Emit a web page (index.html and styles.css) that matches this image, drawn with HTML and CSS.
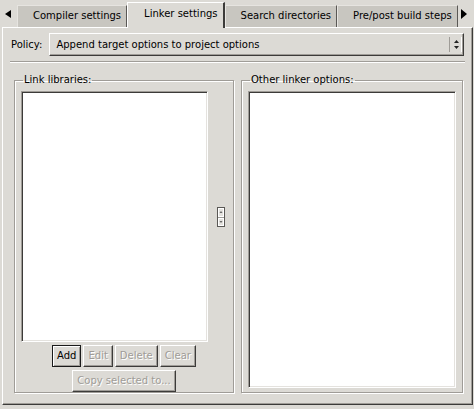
FILE: index.html
```html
<!DOCTYPE html>
<html>
<head>
<meta charset="utf-8">
<link rel="stylesheet" href="styles.css">
</head>
<body>
<div class="tabbar">
  <div class="scroll scroll-left"><span class="tri-left"></span></div>
  <div class="tab">Compiler settings</div>
  <div class="tab active">Linker settings</div>
  <div class="tab">Search directories</div>
  <div class="tab">Pre/post build steps</div>
  <div class="scroll scroll-right"><span class="tri-right"></span></div>
</div>
<div class="panel">
  <div class="policy-row">
    <span class="policy-label">Policy:</span>
    <div class="combo">
      <span class="combo-text">Append target options to project options</span>
      <span class="combo-spin">
        <svg width="5" height="9" viewBox="0 0 5 9"><polygon points="2.5,0 5,3 0,3" fill="#222"/><polygon points="0,6 5,6 2.5,9" fill="#222"/></svg>
      </span>
    </div>
  </div>
  <div class="separator"></div>
  <div class="groups">
    <fieldset class="group group-left">
      <legend>Link libraries:</legend>
      <div class="list-row">
        <div class="listbox list-libs"></div>
        <div class="handle">
          <svg width="8" height="20" viewBox="0 0 8 20">
            <rect x="0.5" y="0.5" width="7" height="19" fill="#e4e2de" stroke="#5a5855"/>
            <line x1="0" y1="10" x2="8" y2="10" stroke="#5a5855"/>
            <rect x="1.5" y="1.5" width="5" height="8" fill="none" stroke="#fff"/>
            <rect x="1.5" y="11.5" width="5" height="7" fill="none" stroke="#fff"/>
            <polygon points="4,4 5.5,6 2.5,6" fill="#666"/>
            <polygon points="2.5,14 5.5,14 4,16" fill="#666"/>
          </svg>
        </div>
      </div>
      <div class="btn-row">
        <button class="btn default">Add</button>
        <button class="btn" disabled>Edit</button>
        <button class="btn" disabled>Delete</button>
        <button class="btn" disabled>Clear</button>
      </div>
      <div class="btn-row copy-row">
        <button class="btn" disabled>Copy selected to...</button>
      </div>
    </fieldset>
    <fieldset class="group group-right">
      <legend>Other linker options:</legend>
      <div class="listbox text-area"></div>
    </fieldset>
  </div>
</div>
</body>
</html>
```
FILE: styles.css
```css
html, body {
  margin: 0;
  padding: 0;
}
body {
  width: 474px;
  height: 409px;
  overflow: hidden;
  background: #dcdad5;
  font-family: "DejaVu Sans", "Liberation Sans", sans-serif;
  font-size: 10px;
  line-height: 12px;
  color: #000;
}

/* ---------- tab bar ---------- */
.tabbar {
  display: flex;
  height: 28px;
  align-items: flex-start;
}
.scroll {
  height: 27px;
  display: flex;
  box-sizing: border-box;
}
.scroll-left {
  width: 17px;
  padding: 10px 0 0 5px;
}
.tri-left {
  width: 0;
  height: 0;
  border-right: 6px solid #000;
  border-top: 4px solid transparent;
  border-bottom: 4px solid transparent;
}
.scroll-right {
  flex: 1;
  padding: 9px 0 0 3px;
}
.tri-right {
  width: 0;
  height: 0;
  border-left: 6px solid #000;
  border-top: 5px solid transparent;
  border-bottom: 5px solid transparent;
}
.tab {
  box-sizing: border-box;
  margin-top: 5px;
  height: 22px;
  padding: 4px 5px 0 15px;
  background: #c8c6c0;
  border-top: 1px solid #e6e4e0;
  border-left: 1px solid #e6e4e0;
  border-right: 1px solid #5a5855;
  white-space: nowrap;
}
.tab.active {
  position: relative;
  z-index: 1;
  margin-top: 2px;
  height: 26px;
  padding: 5px 5px 0 16px;
  background: #dcdad5;
  border-top: 1px solid #fff;
  border-left: 1px solid #fff;
  border-right: 2px solid #3c3b39;
}

/* ---------- panel ---------- */
.panel {
  box-sizing: border-box;
  margin: -1px 1px 0 2px;
  height: 378px;
  padding: 5px 7px 0 7px;
  border-top: 1px solid #fff;
  border-left: 1px solid #fff;
  border-right: 1px solid #3c3b39;
  border-bottom: 1px solid #3c3b39;
  box-shadow: inset -1px -1px 0 #9f9c97;
  display: flex;
  flex-direction: column;
}

.policy-row {
  display: flex;
  align-items: center;
  height: 23px;
}
.policy-label {
  margin: 0 7px 0 1px;
}
.combo {
  flex: 1;
  margin-right: 1px;
  box-sizing: border-box;
  height: 23px;
  display: flex;
  align-items: center;
  border-top: 1px solid #fff;
  border-left: 1px solid #fff;
  border-right: 1px solid #3c3b39;
  border-bottom: 1px solid #3c3b39;
  box-shadow: inset -1px -1px 0 #9f9c97;
}
.combo-text {
  flex: 1;
  padding-left: 6px;
  white-space: nowrap;
}
.combo-spin {
  width: 13px;
  height: 15px;
  margin-right: 1px;
  box-sizing: border-box;
  border-left: 1px solid #9f9c97;
  box-shadow: -1px 0 0 #fff inset;
  display: flex;
  align-items: center;
  justify-content: center;
}

.separator {
  margin-top: 5px;
  border-top: 1px solid #a09d98;
  border-bottom: 1px solid #fff;
}

/* ---------- groups ---------- */
.groups {
  display: flex;
  margin: 11px 1px 0 4px;
  gap: 7px;
}
.group {
  margin: 0;
  min-width: 0;
  box-sizing: border-box;
  border: 1px solid #9f9c97;
  box-shadow: inset 1px 1px 0 #fff, 1px 1px 0 #fff;
  display: flex;
  flex-direction: column;
}
.group legend {
  padding: 0 1px;
  margin-left: 2px;
  line-height: 12px;
}
.group-left {
  width: 220px;
  padding: 5px 6px 0 6px;
}
.group-right {
  width: 222px;
  padding: 5px 6px 4px 6px;
}

.listbox {
  box-sizing: border-box;
  background: #fff;
  border-style: solid;
  border-width: 1px;
  border-color: #9f9c97 #fff #fff #9f9c97;
  box-shadow: inset 1px 1px 0 #3c3b39, inset -1px -1px 0 #e4e2de;
}
.list-row {
  display: flex;
  align-items: center;
}
.list-libs {
  width: 187px;
  height: 251px;
}
.handle {
  margin-left: 9px;
  width: 8px;
  height: 20px;
  display: flex;
}
.text-area {
  flex: 1;
}

.btn-row {
  display: flex;
  justify-content: center;
  gap: 2px;
  margin-top: 3px;
}
.copy-row {
  margin-top: 3px;
  margin-bottom: 0;
}
.btn {
  box-sizing: border-box;
  height: 22px;
  min-width: 28px;
  padding: 0 4px;
  margin: 0;
  font-family: "DejaVu Sans", "Liberation Sans", sans-serif;
  font-size: 10px;
  line-height: 12px;
  background: #dcdad5;
  color: #000;
  border-style: solid;
  border-width: 1px;
  border-color: #fff #3c3b39 #3c3b39 #fff;
  box-shadow: inset -1px -1px 0 #9f9c97;
  border-radius: 0;
  white-space: nowrap;
}
.btn:disabled {
  color: #9f9c97;
  text-shadow: 1px 1px 0 #fff;
}
.btn.default {
  border-color: #1a1a1a;
  box-shadow: inset 1px 1px 0 #fff, inset -1px -1px 0 #9f9c97;
}
```
